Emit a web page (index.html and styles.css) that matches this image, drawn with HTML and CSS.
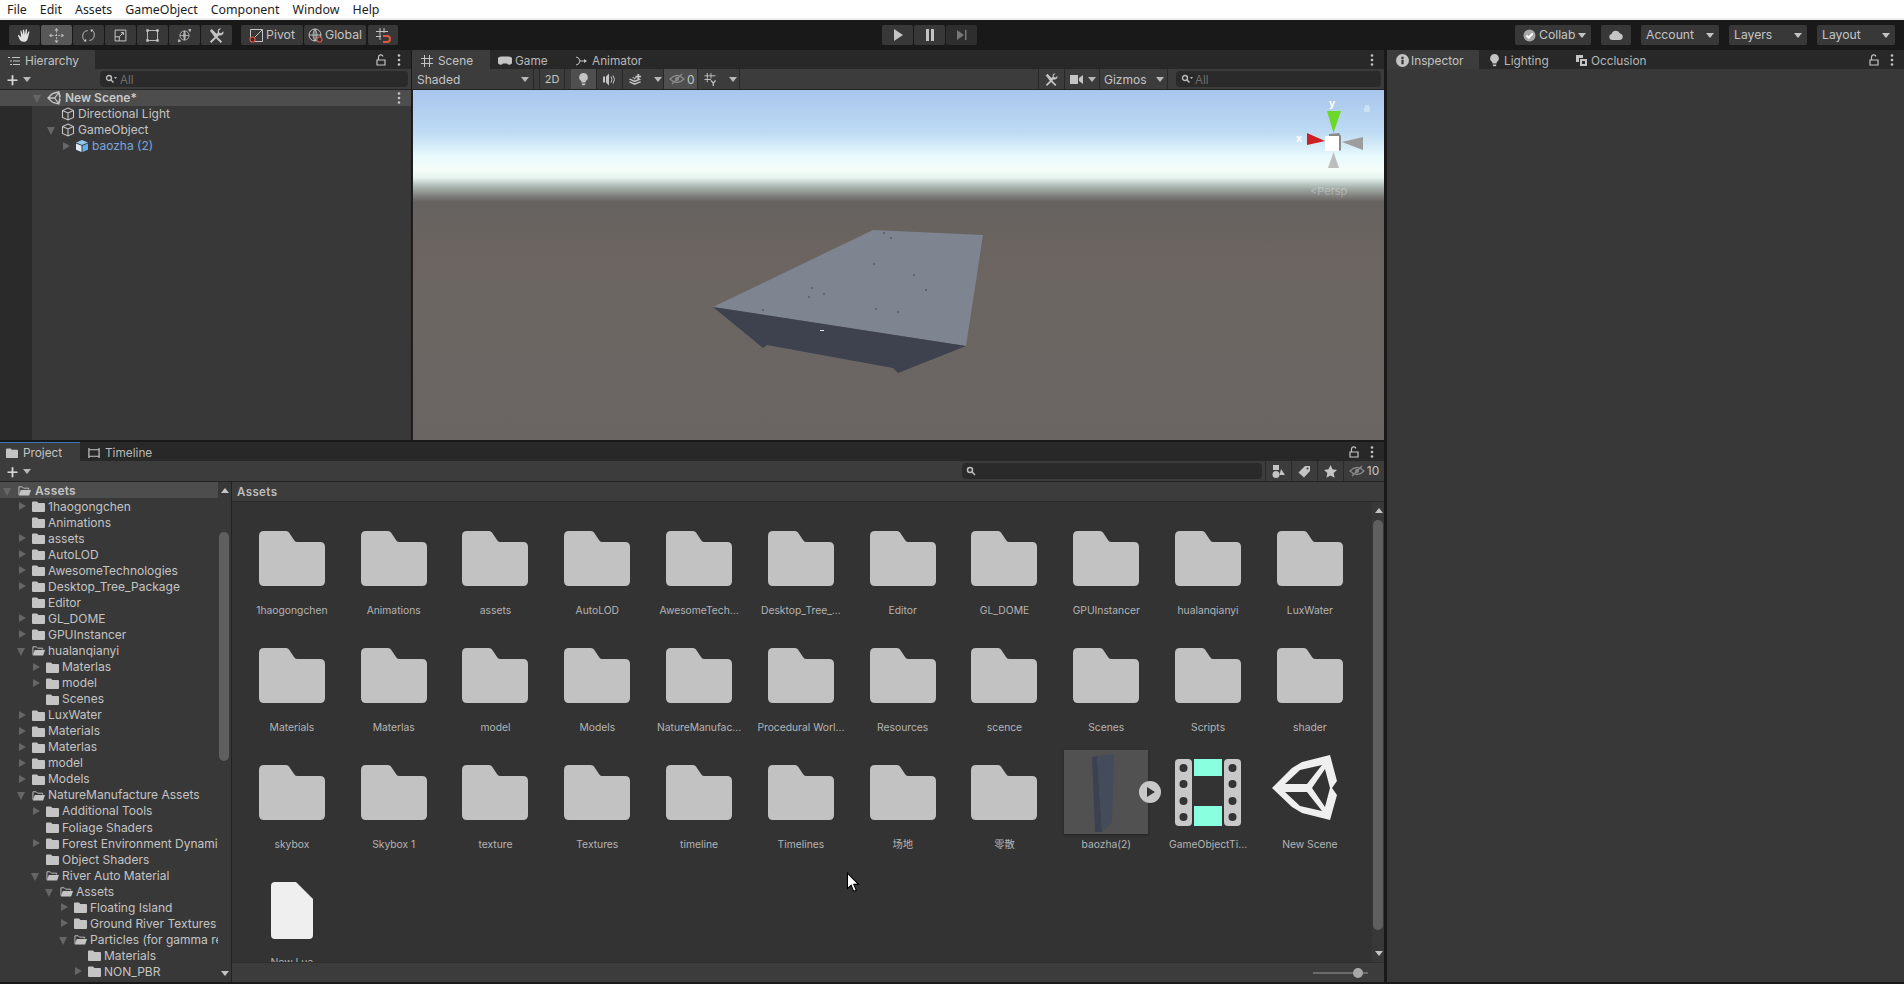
FILE: index.html
```html
<!DOCTYPE html>
<html lang="en">
<head>
<meta charset="utf-8">
<title>Unity Editor</title>
<link rel="stylesheet" href="styles.css">
</head>
<body>
<svg class="defs" aria-hidden="true">
  <symbol id="folder" viewBox="0 0 13 11"><path fill="currentColor" d="M1 0.5h4l1.4 1.6H12a1 1 0 0 1 1 1V10a1 1 0 0 1-1 1H1a1 1 0 0 1-1-1V1.500a1 1 0 0 1 1-1z"/></symbol>
  <symbol id="folderopen" viewBox="0 0 14 11"><path fill="none" stroke="currentColor" d="M1 10V1.500h3.500L6 3h5.500v1.500"/><path fill="currentColor" d="M3 5h11l-2 6H0.800z"/></symbol>
  <symbol id="bigfolder" viewBox="0 0 66 55"><path fill="currentColor" d="M5 0h22q2 0 3 1.500L35 9q1 2 3 2h23q5 0 5 5v34q0 5-5 5H5q-5 0-5-5V5q0-5 5-5z"/></symbol>
  <symbol id="file" viewBox="0 0 42 57"><path fill="currentColor" d="M4 0h21l17 17v36q0 4-4 4H4q-4 0-4-4V4q0-4 4-4z"/></symbol>
  <symbol id="unity" viewBox="0 0 66 66"><path fill="currentColor" fill-rule="evenodd" d="M58 0l7 26-5 7 5 7-7 25-28-7-10-6L0 33l20-20 10-6zM50 10L28 15 13 29h22zM13 37l15 14 22 5-15-19zM40 33l13 19 5-19-5-19z"/></symbol>
  <symbol id="cube" viewBox="0 0 14 14"><path fill="none" stroke="currentColor" stroke-width="1.100" d="M7 1l5.500 2.500v7L7 13l-5.500-2.500v-7zM1.500 3.500L7 6l5.500-2.500M7 6v7"/></symbol>
  <symbol id="prefab" viewBox="0 0 14 14"><path fill="#8fc7f0" d="M7 1l6 2.500L7 6 1 3.500z"/><path fill="#dfe9f2" d="M1 4.500l5.500 2.300V13L1 10.700z"/><path fill="#5fb0ea" d="M13 4.500L7.500 6.800V13l5.500-2.300z"/></symbol>
  <symbol id="kebab" viewBox="0 0 4 14"><circle cx="2" cy="2.500" r="1.300" fill="currentColor"/><circle cx="2" cy="7" r="1.300" fill="currentColor"/><circle cx="2" cy="11.500" r="1.300" fill="currentColor"/></symbol>
  <symbol id="lock" viewBox="0 0 10 12"><path fill="none" stroke="currentColor" stroke-width="1.200" d="M1 6h8v5H1zM2.500 6V3a2.300 2.300 0 0 1 4.500-.5"/></symbol>
  <symbol id="search" viewBox="0 0 12 10"><circle cx="4" cy="4" r="2.500" fill="none" stroke="currentColor" stroke-width="1.400"/><path stroke="currentColor" stroke-width="1.500" d="M6 6l2.500 2.500"/><path fill="currentColor" d="M9 3h3l-1.500 2z"/></symbol>
  <symbol id="bulb" viewBox="0 0 12 15"><path fill="currentColor" d="M6 0a5 5 0 0 1 3 9q-.7.8-.7 2H3.700q0-1.200-.7-2A5 5 0 0 1 6 0zM4 12h4v1.200l-1 1H5l-1-1z"/></symbol>
  <symbol id="caret" viewBox="0 0 8 5"><path fill="currentColor" d="M0 0h8L4 5z"/></symbol>
  <symbol id="grid" viewBox="0 0 12 12"><path fill="none" stroke="currentColor" d="M3.500 0v12M8.500 0v12M0 3.500h12M0 8.500h12"/></symbol>
  <symbol id="tools" viewBox="0 0 16 16"><path fill="currentColor" d="M1 3l2-2 5 5 1.500-1.500q-1-3 2-4l1.500.1L10.500 3l.5 2 2 .5 2.400-2q.6 3-2 4.300-1.500.5-2.500 0L9 9.500l5 5-1.500 1.500-5-5L2.500 16 1 14.500 6 9.500z"/></symbol>
  <symbol id="hidden" viewBox="0 0 16 12"><path fill="none" stroke="currentColor" stroke-width="1.200" d="M1 6q7-7 14 0-7 7-14 0zM3 11L13 1"/><circle cx="8" cy="6" r="2" fill="currentColor"/></symbol>
</svg>

<header class="menubar">
  <span>File</span><span>Edit</span><span>Assets</span><span>GameObject</span><span>Component</span><span>Window</span><span>Help</span>
</header>

<section class="toolbar">
  <div class="tgroup">
    <button class="tbtn"><svg class="ti hi" viewBox="0 0 18 18"><path fill="currentColor" d="M4 3l1 0 2 5V2h1.500l1 6 1-6.500H12l-.3 7 2-4.500 1.300.5-2 8q-1 4-5 4-3.500 0-5-3L1 9l1-1 3 3z"/></svg></button>
    <button class="tbtn on"><svg class="ti" viewBox="0 0 18 18"><path fill="none" stroke="currentColor" stroke-dasharray="2.500 1.500" d="M9 3v12M3 9h12"/><path fill="currentColor" d="M9 0l2.500 3h-5zM9 18l-2.500-3h5zM0 9l3-2.500v5zM18 9l-3 2.500v-5z"/></svg></button>
    <button class="tbtn"><svg class="ti" viewBox="0 0 18 18"><path fill="none" stroke="currentColor" stroke-width="1.100" d="M8 3Q2 4 2 10q0 3 2 5M10 15q6-1 6-7 0-3-2-5"/><path fill="currentColor" d="M3 16l3-3 .5 3.500zM15 2l-3 3-.5-3.500z"/></svg></button>
    <button class="tbtn"><svg class="ti" viewBox="0 0 18 18"><path fill="none" stroke="currentColor" stroke-width="1.200" d="M2.500 2.500h13v13h-13zM2.500 10.500h5v5M7.500 10.500l5-5M9.500 5.500h3v3"/></svg></button>
    <button class="tbtn"><svg class="ti" viewBox="0 0 18 18"><path fill="none" stroke="currentColor" stroke-width="1.100" d="M3 3h12v12H3z"/><path fill="currentColor" d="M1.500 1.500h3v3h-3zM13.500 1.500h3v3h-3zM1.500 13.500h3v3h-3zM13.500 13.500h3v3h-3z"/></svg></button>
    <button class="tbtn"><svg class="ti" viewBox="0 0 18 18"><circle cx="9" cy="9" r="5.500" fill="none" stroke="currentColor"/><path fill="none" stroke="currentColor" stroke-width=".9" d="M3.500 9h11M9 3.500v11M9 3.500q-3 5.500 0 11M9 3.500q3 5.500 0 11"/><path fill="currentColor" d="M1 17l1-4 3 3zM17 1l-1 4-3-3z"/></svg></button>
    <button class="tbtn"><svg class="ti"><use href="#tools"/></svg></button>
  </div>
  <div class="tgroup g2">
    <button class="tbtn wide"><svg class="ti small" viewBox="0 0 15 15"><path fill="none" stroke="#c4c4c4" d="M1.500 1.500h12v12h-12z"/><path stroke="#c4c4c4" d="M5 10L13 2"/><circle cx="3.500" cy="11.500" r="2.500" fill="#2f2f2f" stroke="#e0563f" stroke-width="1.200"/></svg>Pivot</button>
    <button class="tbtn wide"><svg class="ti small" viewBox="0 0 15 15"><circle cx="7" cy="7" r="6" fill="none" stroke="#c4c4c4"/><path fill="none" stroke="#c4c4c4" stroke-width=".9" d="M1 7h12M7 1v12M7 1q-4 6 0 12M7 1q4 6 0 12"/><circle cx="11.500" cy="11.500" r="2.500" fill="#2f2f2f" stroke="#e0563f" stroke-width="1.200"/></svg>Global</button>
    <button class="tbtn snap"><svg class="ti small" viewBox="0 0 15 15"><path fill="none" stroke="#c4c4c4" d="M4 0v12M8 0v5M0 3.500h12M0 8.500h5"/><path fill="none" stroke="#e0563f" stroke-width="2" d="M7 8h4a2.500 2.500 0 0 1 0 6H7"/></svg></button>
  </div>
  <div class="play">
    <button class="tbtn pb"><svg viewBox="0 0 10 12" class="pi"><path fill="currentColor" d="M1 0l9 6-9 6z"/></svg></button>
    <button class="tbtn pb"><svg viewBox="0 0 10 12" class="pi"><path fill="currentColor" d="M1 0h3v12H1zM6 0h3v12H6z"/></svg></button>
    <button class="tbtn pb dim"><svg viewBox="0 0 10 12" class="pi"><path fill="currentColor" d="M0 1l7 5-7 5zM8 1h1.500v10H8z"/></svg></button>
  </div>
  <div class="tright">
    <button class="dd collab"><svg class="chk" viewBox="0 0 13 13"><circle cx="6.500" cy="6.500" r="6" fill="#a8a8a8"/><path fill="none" stroke="#fff" stroke-width="2" d="M3.500 6.500l2.200 2.200 4-4.400"/></svg>Collab<svg class="car"><use href="#caret"/></svg></button>
    <button class="dd cloud"><svg viewBox="0 0 14 10" class="cl"><path fill="currentColor" d="M3 10a3 3 0 0 1-.5-5.900 4.500 4.500 0 0 1 8.500-.6A3.300 3.300 0 0 1 11 10z"/></svg></button>
    <button class="dd fixed"><span>Account</span><svg class="car"><use href="#caret"/></svg></button>
    <button class="dd fixed"><span>Layers</span><svg class="car"><use href="#caret"/></svg></button>
    <button class="dd fixed"><span>Layout</span><svg class="car"><use href="#caret"/></svg></button>
  </div>
</section>

<main class="workspace">
  <div class="leftcol">
    <div class="toprow">
      <section class="hierarchy">
        <nav class="tabs">
          <div class="tab active htab"><svg class="tabi" viewBox="0 0 12 9"><path fill="none" stroke="currentColor" d="M0 1h2M4 1h8M2 4.500h2M5 4.500h7M2 8h2M5 8h7"/></svg>Hierarchy</div>
          <div class="tabend"><svg class="lock"><use href="#lock"/></svg><svg class="kebab"><use href="#kebab"/></svg></div>
        </nav>
        <div class="subbar">
          <div class="plus"><span class="plusi">+</span><svg class="car sm"><use href="#caret"/></svg></div>
          <div class="searchbox hsearch"><svg class="si"><use href="#search"/></svg><span>All</span></div>
        </div>
        <div class="hbody">
          <div class="hrow sel hl0"><i class="arrow d"></i><svg class="hicon"><use href="#unity"/></svg><b>New Scene*</b><svg class="kebab hk"><use href="#kebab"/></svg></div>
          <div class="hrow hl1"><i class="arrow"></i><svg class="hicon"><use href="#cube"/></svg><span>Directional Light</span></div>
          <div class="hrow hl1"><i class="arrow d"></i><svg class="hicon"><use href="#cube"/></svg><span>GameObject</span></div>
          <div class="hrow hl2"><i class="arrow r"></i><svg class="hicon"><use href="#prefab"/></svg><span class="blue">baozha (2)</span></div>
        </div>
      </section>

      <section class="scene">
        <nav class="tabs">
          <div class="tab active stab"><svg class="tabi"><use href="#grid"/></svg>Scene</div>
          <div class="tab gtab"><svg class="tabi w" viewBox="0 0 14 9"><path fill="currentColor" d="M4 0h6a4 4 0 0 1 1.500 8.300Q10 8.500 9 7H5Q4 8.500 2.500 8.300A4 4 0 0 1 4 0z"/></svg>Game</div>
          <div class="tab atab"><svg class="tabi" viewBox="0 0 12 10"><path fill="none" stroke="currentColor" d="M1 1q3 0 4 4M1 9q3 0 4-4h6"/><path fill="currentColor" d="M9 3l3 2-3 2z"/></svg>Animator</div>
          <div class="tabend"><svg class="kebab"><use href="#kebab"/></svg></div>
        </nav>
        <div class="subbar scenebar">
          <div class="sb shaded"><span>Shaded</span><svg class="car sm"><use href="#caret"/></svg></div>
          <div class="sb two">2D</div>
          <div class="sb ic on"><svg class="sbi"><use href="#bulb"/></svg></div>
          <div class="sb ic"><svg class="sbi" viewBox="0 0 13 12"><path fill="currentColor" d="M0 3h2v6H0zM3 3l3-3v12L3 9z"/><path fill="none" stroke="currentColor" d="M8 3q2 3 0 6M10 2q3 4 0 8"/></svg></div>
          <div class="sb fx"><svg class="sbi" viewBox="0 0 14 12"><path fill="currentColor" d="M1 5l5 2 5-2 2 1-7 3-6-3zM1 8l5 2 6-2 1 1-7 3-6-3zM3 3l3 1 3-1-3 3z"/><path fill="currentColor" d="M9 0h2v2h2v1.500h-2v2H9v-2H7V2h2z"/></svg><svg class="car sm"><use href="#caret"/></svg></div>
          <div class="sb hid on"><svg class="sbi w"><use href="#hidden"/></svg><span>0</span></div>
          <div class="sb gridb"><svg class="sbi" viewBox="0 0 13 14"><path fill="none" stroke="currentColor" d="M3 0v10M7 0v6M0 3h12M0 7h7"/><path fill="none" stroke="currentColor" stroke-width="1.400" d="M7 8l2.500 3 2.500-3M9.500 11v3"/></svg><svg class="car sm"><use href="#caret"/></svg></div>
          <div class="grow"></div>
          <div class="sb tl"><svg class="sbi"><use href="#tools"/></svg></div>
          <div class="sb cam"><svg class="sbi" viewBox="0 0 13 9"><path fill="currentColor" d="M0 0h8v9H0zM9 3l4-3v9L9 6z"/></svg><svg class="car sm"><use href="#caret"/></svg></div>
          <div class="sb giz"><span>Gizmos</span><svg class="car sm"><use href="#caret"/></svg></div>
          <div class="searchbox ssearch"><svg class="si"><use href="#search"/></svg><span>All</span></div>
        </div>
        <div class="view">
          <svg class="mesh" viewBox="0 0 972 350" aria-hidden="true">
            <polygon fill="#7e8590" points="461,140 571,145 554,256 301,217"/>
            <polygon fill="#3d424e" points="301,217 554,256 486,283 481,278 355,255 351,258"/>
            <g fill="#3d424e"><circle cx="472" cy="143" r=".8"/><circle cx="479" cy="148" r=".8"/><circle cx="462" cy="174" r=".8"/><circle cx="502" cy="185" r=".8"/><circle cx="514" cy="200" r=".8"/><circle cx="400" cy="198" r=".8"/><circle cx="412" cy="204" r=".8"/><circle cx="397" cy="207" r=".8"/><circle cx="464" cy="219" r=".8"/><circle cx="486" cy="222" r=".8"/><circle cx="351" cy="220" r=".8"/></g>
            <rect x="408" y="240" width="4" height="1" fill="#e8e8e8"/>
          </svg>
          <div class="gizmo">
            <svg viewBox="0 10 84 100" class="gz" aria-hidden="true">
              <polygon fill="#9d9d9d" points="42,62 63,57 63,70"/>
              <polygon fill="#bdbdbd" points="33.500,72 28,88 39,88"/>
              <polygon fill="#ce1f22" points="25,61 7,53 7,65"/>
              <polygon fill="#6cd92a" points="33.500,53 27,31 41,31"/>
              <polygon fill="#8a8a8a" points="29,54 39,53 41,56 41,70 39,71 29,56"/>
              <rect x="25" y="56" width="14" height="15" fill="#fff"/>
              <path fill="#fff" fill-opacity=".35" d="M64 27h6v5h-6zM65 27v-2h4v2z"/>
            </svg>
            <span class="axis ax">x</span><span class="axis ay">y</span>
            <span class="persp">&lt;Persp</span>
          </div>
        </div>
      </section>
    </div>

    <section class="project">
      <nav class="tabs">
        <div class="tab active ptab"><svg class="tabi"><use href="#folder"/></svg>Project</div>
        <div class="tab ttab"><svg class="tabi" viewBox="0 0 13 11"><path fill="none" stroke="currentColor" stroke-width="1.300" d="M1 0v11M12 0v11M1 2h11M1 9h11"/></svg>Timeline</div>
        <div class="tabend"><svg class="lock"><use href="#lock"/></svg><svg class="kebab"><use href="#kebab"/></svg></div>
      </nav>
      <div class="subbar projbar">
        <div class="plus"><span class="plusi">+</span><svg class="car sm"><use href="#caret"/></svg></div>
        <div class="grow"></div>
        <div class="searchbox psearch"><svg class="si ps" viewBox="0 0 10 10"><circle cx="4" cy="4" r="2.500" fill="none" stroke="currentColor" stroke-width="1.500"/><path stroke="currentColor" stroke-width="1.600" d="M6 6l3 3"/></svg></div>
        <div class="pb2"><svg class="sbi" viewBox="0 0 13 13"><circle cx="4" cy="9.500" r="3.500" fill="currentColor"/><path fill="currentColor" d="M1 0h6v5H1zM9 4l4 6H7.500z"/></svg></div>
        <div class="pb2"><svg class="sbi" viewBox="0 0 13 13"><path fill="currentColor" d="M7 1h5v5l-6 6.500L.5 7.500z"/><circle cx="9.500" cy="3.500" r="1" fill="#3c3c3c"/></svg></div>
        <div class="pb2 dimmed"><svg class="sbi" viewBox="0 0 13 13"><path fill="currentColor" d="M6.500 0l2 4.300 4.500.6-3.300 3.200.8 4.700-4-2.300-4 2.300.8-4.700L0 4.900l4.500-.6z"/></svg></div>
        <div class="pb2 last"><svg class="sbi w dimhid"><use href="#hidden"/></svg><span>10</span></div>
      </div>
      <div class="pbody">
        <aside class="tree">
          <div class="treelist">
            <div class="row sel l0"><i class="arrow d"></i><svg class="ficon op"><use href="#folderopen"/></svg><b>Assets</b></div>
            <div class="row l1"><i class="arrow r"></i><svg class="ficon"><use href="#folder"/></svg><span>1haogongchen</span></div>
            <div class="row l1"><i class="arrow"></i><svg class="ficon"><use href="#folder"/></svg><span>Animations</span></div>
            <div class="row l1"><i class="arrow r"></i><svg class="ficon"><use href="#folder"/></svg><span>assets</span></div>
            <div class="row l1"><i class="arrow r"></i><svg class="ficon"><use href="#folder"/></svg><span>AutoLOD</span></div>
            <div class="row l1"><i class="arrow r"></i><svg class="ficon"><use href="#folder"/></svg><span>AwesomeTechnologies</span></div>
            <div class="row l1"><i class="arrow r"></i><svg class="ficon"><use href="#folder"/></svg><span>Desktop_Tree_Package</span></div>
            <div class="row l1"><i class="arrow"></i><svg class="ficon"><use href="#folder"/></svg><span>Editor</span></div>
            <div class="row l1"><i class="arrow r"></i><svg class="ficon"><use href="#folder"/></svg><span>GL_DOME</span></div>
            <div class="row l1"><i class="arrow r"></i><svg class="ficon"><use href="#folder"/></svg><span>GPUInstancer</span></div>
            <div class="row l1"><i class="arrow d"></i><svg class="ficon op"><use href="#folderopen"/></svg><span>hualanqianyi</span></div>
            <div class="row l2"><i class="arrow r"></i><svg class="ficon"><use href="#folder"/></svg><span>Materlas</span></div>
            <div class="row l2"><i class="arrow r"></i><svg class="ficon"><use href="#folder"/></svg><span>model</span></div>
            <div class="row l2"><i class="arrow"></i><svg class="ficon"><use href="#folder"/></svg><span>Scenes</span></div>
            <div class="row l1"><i class="arrow r"></i><svg class="ficon"><use href="#folder"/></svg><span>LuxWater</span></div>
            <div class="row l1"><i class="arrow r"></i><svg class="ficon"><use href="#folder"/></svg><span>Materials</span></div>
            <div class="row l1"><i class="arrow r"></i><svg class="ficon"><use href="#folder"/></svg><span>Materlas</span></div>
            <div class="row l1"><i class="arrow r"></i><svg class="ficon"><use href="#folder"/></svg><span>model</span></div>
            <div class="row l1"><i class="arrow r"></i><svg class="ficon"><use href="#folder"/></svg><span>Models</span></div>
            <div class="row l1"><i class="arrow d"></i><svg class="ficon op"><use href="#folderopen"/></svg><span>NatureManufacture Assets</span></div>
            <div class="row l2"><i class="arrow r"></i><svg class="ficon"><use href="#folder"/></svg><span>Additional Tools</span></div>
            <div class="row l2"><i class="arrow"></i><svg class="ficon"><use href="#folder"/></svg><span>Foliage Shaders</span></div>
            <div class="row l2"><i class="arrow r"></i><svg class="ficon"><use href="#folder"/></svg><span>Forest Environment Dynamic Nature</span></div>
            <div class="row l2"><i class="arrow"></i><svg class="ficon"><use href="#folder"/></svg><span>Object Shaders</span></div>
            <div class="row l2"><i class="arrow d"></i><svg class="ficon op"><use href="#folderopen"/></svg><span>River Auto Material</span></div>
            <div class="row l3"><i class="arrow d"></i><svg class="ficon op"><use href="#folderopen"/></svg><span>Assets</span></div>
            <div class="row l4"><i class="arrow r"></i><svg class="ficon"><use href="#folder"/></svg><span>Floating Island</span></div>
            <div class="row l4"><i class="arrow r"></i><svg class="ficon"><use href="#folder"/></svg><span>Ground River Textures</span></div>
            <div class="row l4"><i class="arrow d"></i><svg class="ficon op"><use href="#folderopen"/></svg><span>Particles (for gamma rendering)</span></div>
            <div class="row l5"><i class="arrow"></i><svg class="ficon"><use href="#folder"/></svg><span>Materials</span></div>
            <div class="row l5"><i class="arrow r"></i><svg class="ficon"><use href="#folder"/></svg><span>NON_PBR</span></div>
          </div>
          <div class="vscroll treescroll"><svg class="car up"><use href="#caret"/></svg><div class="thumb tthumb"></div><svg class="car down"><use href="#caret"/></svg></div>
        </aside>
        <div class="assets">
          <div class="crumb">Assets</div>
          <div class="amain">
            <div class="agrid">
              <div class="cell"><div class="ibox"><svg class="bf"><use href="#bigfolder"/></svg></div><p>1haogongchen</p></div>
              <div class="cell"><div class="ibox"><svg class="bf"><use href="#bigfolder"/></svg></div><p>Animations</p></div>
              <div class="cell"><div class="ibox"><svg class="bf"><use href="#bigfolder"/></svg></div><p>assets</p></div>
              <div class="cell"><div class="ibox"><svg class="bf"><use href="#bigfolder"/></svg></div><p>AutoLOD</p></div>
              <div class="cell"><div class="ibox"><svg class="bf"><use href="#bigfolder"/></svg></div><p>AwesomeTech...</p></div>
              <div class="cell"><div class="ibox"><svg class="bf"><use href="#bigfolder"/></svg></div><p>Desktop_Tree_...</p></div>
              <div class="cell"><div class="ibox"><svg class="bf"><use href="#bigfolder"/></svg></div><p>Editor</p></div>
              <div class="cell"><div class="ibox"><svg class="bf"><use href="#bigfolder"/></svg></div><p>GL_DOME</p></div>
              <div class="cell"><div class="ibox"><svg class="bf"><use href="#bigfolder"/></svg></div><p>GPUInstancer</p></div>
              <div class="cell"><div class="ibox"><svg class="bf"><use href="#bigfolder"/></svg></div><p>hualanqianyi</p></div>
              <div class="cell"><div class="ibox"><svg class="bf"><use href="#bigfolder"/></svg></div><p>LuxWater</p></div>

              <div class="cell"><div class="ibox"><svg class="bf"><use href="#bigfolder"/></svg></div><p>Materials</p></div>
              <div class="cell"><div class="ibox"><svg class="bf"><use href="#bigfolder"/></svg></div><p>Materlas</p></div>
              <div class="cell"><div class="ibox"><svg class="bf"><use href="#bigfolder"/></svg></div><p>model</p></div>
              <div class="cell"><div class="ibox"><svg class="bf"><use href="#bigfolder"/></svg></div><p>Models</p></div>
              <div class="cell"><div class="ibox"><svg class="bf"><use href="#bigfolder"/></svg></div><p>NatureManufac...</p></div>
              <div class="cell"><div class="ibox"><svg class="bf"><use href="#bigfolder"/></svg></div><p>Procedural Worl...</p></div>
              <div class="cell"><div class="ibox"><svg class="bf"><use href="#bigfolder"/></svg></div><p>Resources</p></div>
              <div class="cell"><div class="ibox"><svg class="bf"><use href="#bigfolder"/></svg></div><p>scence</p></div>
              <div class="cell"><div class="ibox"><svg class="bf"><use href="#bigfolder"/></svg></div><p>Scenes</p></div>
              <div class="cell"><div class="ibox"><svg class="bf"><use href="#bigfolder"/></svg></div><p>Scripts</p></div>
              <div class="cell"><div class="ibox"><svg class="bf"><use href="#bigfolder"/></svg></div><p>shader</p></div>

              <div class="cell"><div class="ibox"><svg class="bf"><use href="#bigfolder"/></svg></div><p>skybox</p></div>
              <div class="cell"><div class="ibox"><svg class="bf"><use href="#bigfolder"/></svg></div><p>Skybox 1</p></div>
              <div class="cell"><div class="ibox"><svg class="bf"><use href="#bigfolder"/></svg></div><p>texture</p></div>
              <div class="cell"><div class="ibox"><svg class="bf"><use href="#bigfolder"/></svg></div><p>Textures</p></div>
              <div class="cell"><div class="ibox"><svg class="bf"><use href="#bigfolder"/></svg></div><p>timeline</p></div>
              <div class="cell"><div class="ibox"><svg class="bf"><use href="#bigfolder"/></svg></div><p>Timelines</p></div>
              <div class="cell"><div class="ibox"><svg class="bf"><use href="#bigfolder"/></svg></div><p>场地</p></div>
              <div class="cell"><div class="ibox"><svg class="bf"><use href="#bigfolder"/></svg></div><p>零散</p></div>
              <div class="cell"><div class="ibox"><div class="thumbimg"><svg viewBox="0 0 84 85" class="prism" aria-hidden="true"><polygon fill="#3b4150" points="28,7 33,6 38,82 31,82"/><polygon fill="#444b5a" points="33,6 50,4 48,72 38,82"/></svg><svg viewBox="0 0 22 22" class="playc" aria-hidden="true"><circle cx="11" cy="11" r="11" fill="#c8c8c8"/><path fill="#333" d="M8 6l8 5-8 5z"/></svg></div></div><p>baozha(2)</p></div>
              <div class="cell"><div class="ibox"><svg viewBox="0 0 66 67" class="tlicon" aria-hidden="true"><rect width="17" height="67" rx="4" fill="#c8c8c8"/><rect x="49" width="17" height="67" rx="4" fill="#c8c8c8"/><g fill="#333"><circle cx="8.500" cy="9" r="4"/><circle cx="8.500" cy="25" r="4"/><circle cx="8.500" cy="42" r="4"/><circle cx="8.500" cy="58" r="4"/><circle cx="57.500" cy="9" r="4"/><circle cx="57.500" cy="25" r="4"/><circle cx="57.500" cy="42" r="4"/><circle cx="57.500" cy="58" r="4"/></g><rect x="19" width="28" height="17" fill="#8affdf"/><rect x="19" y="47" width="28" height="20" fill="#8affdf"/></svg></div><p>GameObjectTi...</p></div>
              <div class="cell"><div class="ibox"><svg class="logo"><use href="#unity"/></svg></div><p>New Scene</p></div>

              <div class="cell"><div class="ibox"><svg class="fileicon"><use href="#file"/></svg></div><p>New Lua</p></div>
            </div>
            <div class="vscroll gridscroll"><svg class="car up"><use href="#caret"/></svg><div class="thumb gthumb"></div><svg class="car down"><use href="#caret"/></svg></div>
          </div>
          <footer class="afoot"><div class="slider"><div class="knob"></div></div></footer>
        </div>
      </div>
    </section>
  </div>

  <section class="inspector">
    <nav class="tabs">
      <div class="tab active itab"><svg class="tabi w2" viewBox="0 0 12 12"><circle cx="6" cy="6" r="6" fill="currentColor"/><path fill="#333" d="M5 2.500h2v2H5zM5 5.300h2v4.200H5z"/></svg>Inspector</div>
      <div class="tab ltab"><svg class="tabi w2"><use href="#bulb"/></svg>Lighting</div>
      <div class="tab otab"><svg class="tabi o" viewBox="0 0 11 11"><path fill="currentColor" d="M0 0h7v3H3v4H0zM4 4h7v7H4z"/><rect x="6" y="6" width="3" height="3" fill="#282828"/></svg>Occlusion</div>
      <div class="tabend"><svg class="lock"><use href="#lock"/></svg><svg class="kebab"><use href="#kebab"/></svg></div>
    </nav>
    <div class="ibody"></div>
  </section>
</main>

<svg class="cursor" viewBox="0 0 12 19" aria-hidden="true"><path fill="#fff" stroke="#000" stroke-width="1" d="M1 1v14l3.300-3 2.300 5.500 2.400-1-2.300-5.300H11z"/></svg>
</body>
</html>
```

FILE: styles.css
```css
* { box-sizing: border-box; }
html, body { margin: 0; padding: 0; }
body {
  width: 1904px; height: 984px; overflow: hidden; position: relative;
  background: #191919; color: #c4c4c4;
  font: 12px/16px Inter, "Noto Sans CJK SC", sans-serif;
  display: flex; flex-direction: column;
}
.defs { position: absolute; width: 0; height: 0; }
button { font: inherit; color: inherit; border: 0; padding: 0; margin: 0; }
p { margin: 0; }

.menubar {
  height: 20px; flex: none; background: #fff; border-bottom: 2px solid #f0f0f0;
  display: flex; gap: 13px; padding: 0 0 0 7px;
  color: #1c1c1c; font: 12.400px/19px "Noto Sans", sans-serif;
}

.toolbar { height: 30px; flex: none; background: #191919; display: flex; align-items: center; padding: 0 9px; }
.tgroup { display: flex; gap: 1px; }
.g2 { margin-left: 9px; }
.tbtn { height: 20px; width: 31px; background: #383838; border-radius: 2px; display: flex; align-items: center; justify-content: center; color: #c4c4c4; }
.tbtn.on { background: #585858; }
.tbtn.wide { width: 62px; gap: 2px; font-size: 12.300px; }
.tbtn.snap { width: 30px; margin-left: 1px; }
.ti { width: 15px; height: 15px; color: #c4c4c4; }
.ti.hi { color: #e2e2e2; }
.ti.small { width: 15px; height: 15px; flex: none; }
.chk { width: 13px; height: 13px; flex: none; }
.play { display: flex; gap: 1px; margin-left: 484px; }
.pb { width: 31px; }
.pb.dim { color: #777; background: #2e2e2e; }
.pi { width: 10px; height: 12px; }
.tright { margin-left: auto; display: flex; gap: 10px; }
.dd { height: 20px; background: #383838; border-radius: 2px; display: flex; align-items: center; font-size: 12.200px; color: #c4c4c4; }
.dd.collab { width: 76px; padding-left: 8px; gap: 3px; }
.dd.cloud { width: 30px; justify-content: center; }
.cl { width: 14px; height: 10px; }
.dd.fixed { width: 78px; padding: 0 5px 0 5px; justify-content: space-between; }
.car { width: 8px; height: 5px; color: #c4c4c4; flex: none; }
.car.sm { color: #b8b8b8; }

.workspace { height: 932px; flex: none; display: flex; }
.leftcol { width: 1384px; flex: none; display: flex; flex-direction: column; gap: 2px; }
.toprow { height: 390px; flex: none; display: flex; gap: 1px; }
.hierarchy { width: 411px; flex: none; display: flex; flex-direction: column; }
.scene { flex: 1; display: flex; flex-direction: column; min-width: 0; }

.tabs { height: 19px; flex: none; background: #282828; display: flex; align-items: stretch; }
.tab { display: flex; align-items: center; color: #b8b8b8; font-size: 11.800px; padding-top: 2px; }
.tab.active { background: #3c3c3c; color: #c4c4c4; }
.tabi { width: 12px; height: 12px; margin-right: 5px; color: #c4c4c4; flex: none; }
.tabi.w { width: 14px; margin-right: 3px; }
.tabi.w2 { width: 13px; height: 13px; margin-right: 2px; }
.tabi.o { width: 11px; height: 11px; margin-right: 4px; }
.htab { width: 95px; padding-left: 8px; }
.stab { width: 78px; padding-left: 9px; margin-left: 0; }
.gtab { width: 76px; padding-left: 8px; }
.atab { padding-left: 9px; }
.ptab { width: 80px; padding-left: 6px; border-top: 1px solid #3a79bb; }
.ttab { padding-left: 8px; }
.itab { width: 92px; padding-left: 9px; }
.ltab { padding-left: 9px; width: 97px; }
.ltab .tabi.w2 { margin-right: 3px; }
.otab { padding-left: 0; }
.tabend { margin-left: auto; display: flex; align-items: center; gap: 11px; padding-right: 10px; }
.lock { width: 10px; height: 12px; color: #c4c4c4; }
.kebab { width: 4px; height: 14px; color: #c4c4c4; }

.subbar { height: 21px; flex: none; background: #3c3c3c; border-bottom: 1px solid #232323; display: flex; align-items: center; }
.plus { width: 100px; display: flex; align-items: center; padding-left: 5px; gap: 3px; flex: none; }
.plusi { font-size: 21px; line-height: 20px; color: #d4d4d4; width: 15px; text-align: center; }
.searchbox { height: 16px; background: #2a2a2a; border-radius: 4px; display: flex; align-items: center; color: #6f6f6f; font-size: 11.500px; }
.si { width: 12px; height: 10px; color: #bdbdbd; margin: 0 2px 0 5px; flex: none; }
.si.ps { width: 10px; height: 10px; margin-left: 4px; }
.hsearch { width: 308px; }
.hsearch span { padding: 1px 0 0 1px; }
.ssearch span { padding: 1px 0 0 0; }
.ssearch { width: 205px; margin-left: 8px; margin-right: 3px; }
.psearch { width: 300px; margin-right: 3px; }
.grow { flex: 1; }

.hbody { flex: 1; background: linear-gradient(90deg, #2a2a2a 32px, #383838 32px); }
.hrow { height: 16px; display: flex; align-items: center; font-size: 12px; color: #c4c4c4; position: relative; }
.hrow.sel { background: #4d4d4d; }
.hrow b { font-weight: 600; margin-left: 4px; color: #c8c8c8; }
.hrow span { margin-left: 3px; }
.hl0 { padding-left: 31px; }
.hl1 { padding-left: 45px; }
.hl2 { padding-left: 59px; }
.hicon { width: 14px; height: 14px; margin-left: 2px; flex: none; color: #c4c4c4; }
.hk { margin-left: auto; margin-right: 10px; }
.blue { color: #7ba5dd; }
.arrow { width: 14px; height: 16px; flex: none; position: relative; display: block; }
.arrow.r::before, .arrow.d::before { content: ""; position: absolute; left: 50%; top: 50%; }
.arrow.r::before { margin: -4.500px 0 0 -3px; border-left: 7px solid #666; border-top: 4.500px solid transparent; border-bottom: 4.500px solid transparent; }
.arrow.d::before { margin: -3px 0 0 -5px; border-top: 8px solid #666; border-left: 4.500px solid transparent; border-right: 4.500px solid transparent; }

.scenebar .sb { height: 20px; display: flex; align-items: center; border-right: 1px solid #282828; color: #c4c4c4; flex: none; }
.scenebar .sb > span { padding-top: 1px; }
.shaded { width: 122px; padding: 0 4px 0 5px; justify-content: space-between; margin-right: 5px; border-left: 0; }
.two { width: 26px; justify-content: center; font-size: 11px; border-left: 1px solid #282828; margin-right: 6px; }
.sb.ic { width: 26px; justify-content: center; }
.sb.on { background: #4f4f4f; }
.sb.fx { width: 41px; padding-left: 6px; gap: 12px; }
.sb.hid { width: 34px; padding-left: 5px; gap: 2px; font-size: 12px; }
.sb.gridb { width: 42px; padding-left: 6px; gap: 12px; }
.sbi { width: 13px; height: 13px; color: #c4c4c4; flex: none; }
.sbi.w { width: 16px; height: 12px; color: #8a8a8a; }
.sb.tl { width: 27px; justify-content: center; border-left: 1px solid #282828; }
.sb.cam { width: 35px; padding-left: 5px; gap: 5px; }
.sb.giz { width: 68px; padding: 0 3px 0 4px; justify-content: space-between; }

.view {
  flex: 1; position: relative; overflow: hidden; border-left: 1px solid #222;
  background: linear-gradient(180deg, #a8c5ec 0%, #bedcf4 12.300%, #e8fafc 19%, #f5fdf9 23%, #e6f3ee 25%, #aab5b0 27.700%, #7b7a76 30.600%, #666260 32%, #6b6460 45%, #6c6663 60%, #6a6562 100%);
}
.mesh { position: absolute; left: -1px; top: 0; width: 972px; height: 350px; }
.gizmo { position: absolute; right: 0; top: 0; width: 84px; height: 100px; }
.gz { width: 84px; height: 100px; display: block; }
.axis { position: absolute; color: #fff; font: 700 11px/12px "Liberation Sans", sans-serif; }
.ax { left: -4px; top: 42px; }
.ay { left: 29px; top: 7px; }
.persp { position: absolute; left: 10px; top: 94px; color: rgba(255,255,255,.3); font-size: 11px; line-height: 14px; }

.project { flex: 1; display: flex; flex-direction: column; min-height: 0; }
.projbar { height: 21px; }
.pb2 { width: 26px; height: 20px; border-left: 1px solid #2a2a2a; display: flex; align-items: center; justify-content: center; color: #c4c4c4; }
.pb2.dimmed { color: #7c7c7c; }
.pb2.last { width: 41px; gap: 2px; }
.pb2.last span { font-size: 12px; }
.dimhid { color: #888; }
.pbody { flex: 1; display: flex; min-height: 0; }
.tree { width: 232px; flex: none; display: flex; background: #383838; border-right: 1px solid #232323; overflow: hidden; }
.treelist { width: 218px; flex: none; overflow: hidden; }
.row { height: 16.050px; display: flex; align-items: center; white-space: nowrap; font-size: 12px; color: #c4c4c4; padding-top: 1px; }
.row.sel { background: #4d4d4d; }
.row b { font-weight: 600; margin-left: 4px; letter-spacing: .2px; }
.row span { margin-left: 3px; }
.l0 { padding-left: 1px; }
.l1 { padding-left: 15px; }
.l2 { padding-left: 29px; }
.l3 { padding-left: 43px; }
.l4 { padding-left: 57px; }
.l5 { padding-left: 71px; }
.ficon { width: 13px; height: 11px; margin-left: 3px; color: #c4c4c4; flex: none; }
.vscroll { width: 12px; flex: none; position: relative; background: #383838; }
.treescroll { width: 13px; }
.thumb { position: absolute; left: 1px; width: 10px; background: #5f5f5f; border-radius: 5px; }
.tthumb { top: 50px; height: 229px; }
.gthumb { top: 18px; height: 410px; left: 1px; }
.car.up { position: absolute; left: 3px; top: 6px; transform: rotate(180deg); }
.car.down { position: absolute; left: 3px; bottom: 6px; }

.assets { flex: 1; display: flex; flex-direction: column; min-width: 0; }
.crumb { height: 20px; flex: none; background: #3c3c3c; border-bottom: 1px solid #2a2a2a; font-weight: 600; font-size: 11.500px; line-height: 21px; padding-left: 5px; color: #bdbdbd; letter-spacing: .4px; }
.amain { flex: 1; display: flex; min-height: 0; background: #333; }
.agrid { flex: 1; overflow: hidden; display: grid; grid-template-columns: repeat(11, 101.800px); grid-auto-rows: 117.200px; padding: 14px 0 0 9px; align-content: start; }
.cell { display: flex; flex-direction: column; align-items: center; }
.ibox { height: 84px; display: flex; align-items: center; justify-content: center; width: 100%; flex: none; }
.bf { width: 66px; height: 55px; color: #c2c2c2; }
.cell p { font-size: 10.300px; line-height: 20px; color: #b4b4b4; white-space: nowrap; }
.thumbimg { width: 84px; height: 84px; background: #515151; position: relative; box-shadow: 0 1px 2px #222; }
.prism { width: 84px; height: 85px; display: block; }
.playc { position: absolute; right: -13px; top: 31px; width: 22px; height: 22px; }
.tlicon { width: 66px; height: 67px; }
.logo { width: 66px; height: 66px; color: #efefef; margin: -8px 0 0 -10px; }
.fileicon { width: 42px; height: 57px; color: #efefef; margin-top: 1px; }
.afoot { height: 20px; flex: none; background: #3c3c3c; border-top: 1px solid #2e2e2e; display: flex; align-items: center; justify-content: flex-end; padding-right: 16px; }
.slider { width: 55px; height: 2px; background: #6a6a6a; position: relative; }
.knob { position: absolute; left: 40px; top: -4px; width: 10px; height: 10px; border-radius: 50%; background: #a8a8a8; }

.inspector { flex: 1; margin-left: 3px; display: flex; flex-direction: column; min-width: 0; }
.ibody { flex: 1; background: #383838; }

.cursor { position: absolute; left: 846px; top: 872px; width: 14px; height: 21px; }
```
